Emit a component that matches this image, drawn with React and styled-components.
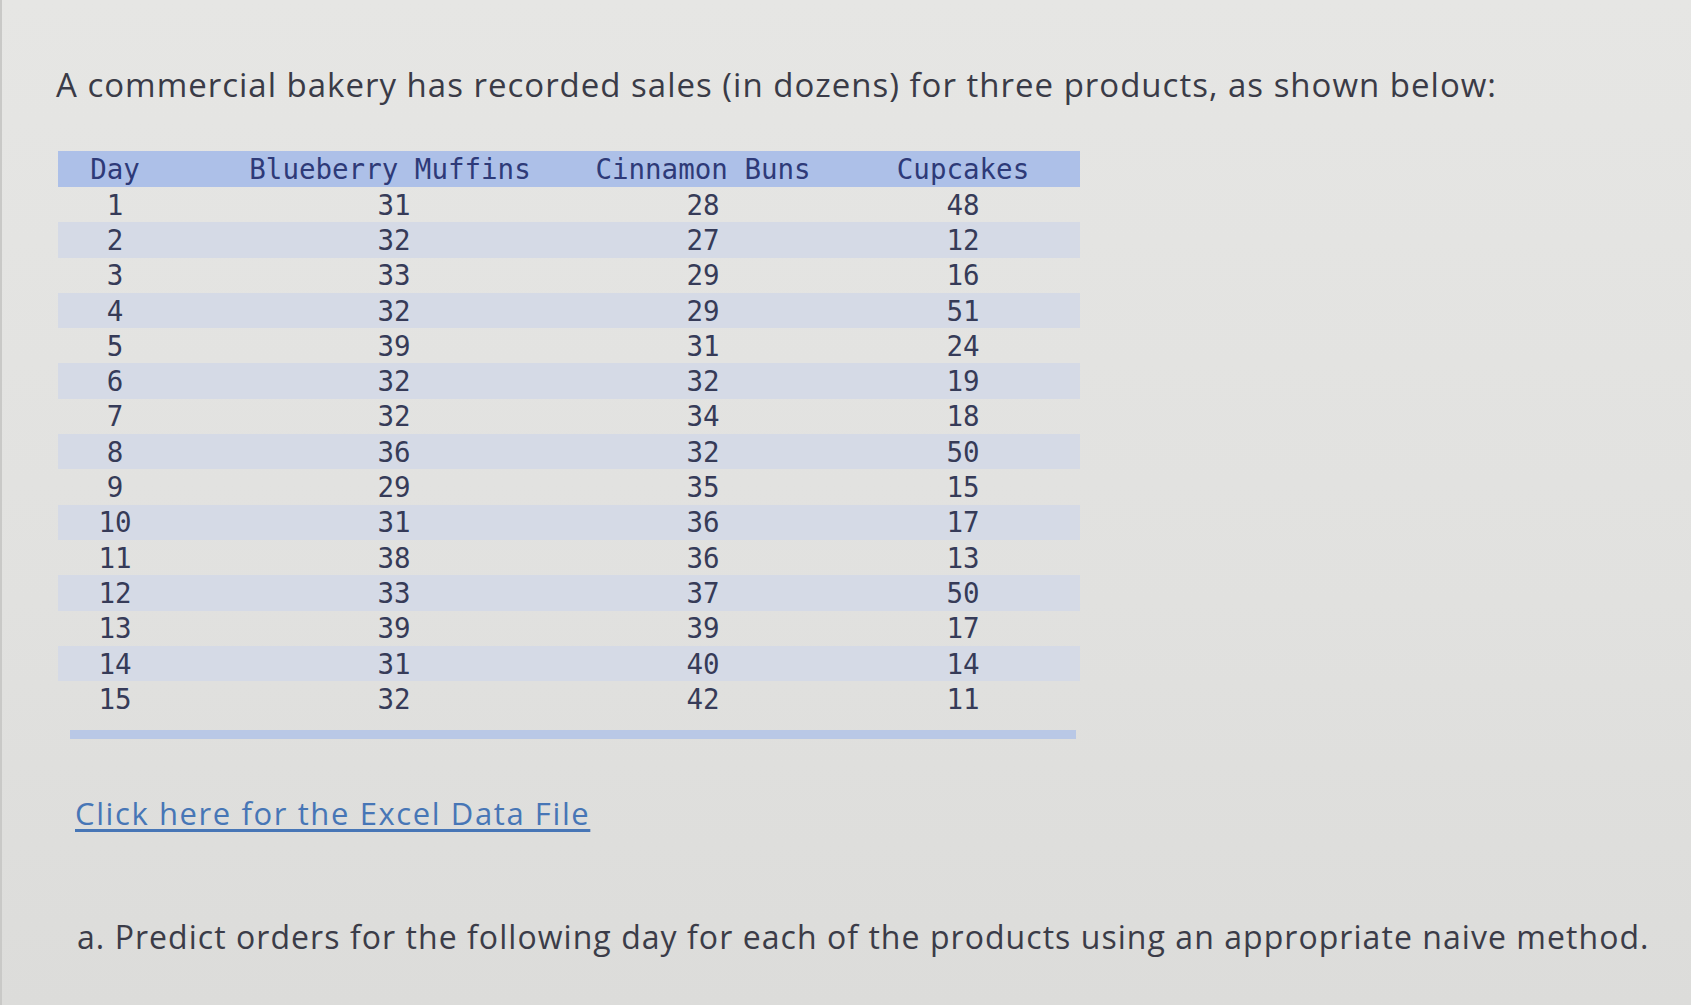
import React from 'react'
import styled, { createGlobalStyle } from 'styled-components'

const GlobalStyle = createGlobalStyle`
  html, body {
    margin: 0;
    padding: 0;
    background: #e3e3e1;
  }
`

const Page = styled.div`
  min-height: 1005px;
  box-sizing: border-box;
  padding: 63px 0 0 54px;
  background: linear-gradient(180deg, #e6e6e4 0%, #e1e1df 60%, #dcdcda 100%);
  border-left: 2px solid #c9c9c7;
  font-family: "Open Sans", "Noto Sans", sans-serif;
  color: #3b3c48;
`

const Title = styled.h1`
  margin: 0;
  font-size: 33px;
  line-height: 44px;
  font-weight: 400;
  letter-spacing: 1px;
  color: #3a3b47;
`

const Table = styled.div`
  margin: 44px 0 0 2px;
  width: 1022px;
  font-family: "DejaVu Sans Mono", "Liberation Mono", monospace;
  font-size: 27.5px;
`

const Row = styled.div`
  display: grid;
  grid-template-columns: 114px 444px 174px 290px;
  align-items: center;
  height: ${({ $head }) => ($head ? '36px' : '35.3px')};
  background: ${({ $head, $striped }) =>
    $head ? '#adc0e8' : $striped ? '#d5dae6' : 'transparent'};
  color: ${({ $head }) => ($head ? '#2e3a78' : '#363b58')};
`

const Cell = styled.div`
  display: flex;
  justify-content: center;
  white-space: nowrap;
  padding-left: ${({ $shift }) => $shift || 0}px;
  padding-right: ${({ $pull }) => $pull || 0}px;
`

const Bar = styled.div`
  margin: 14px 0 0 14px;
  width: 1006px;
  height: 9px;
  background: #b9c8e6;
`

const Link = styled.a`
  display: inline-block;
  margin: 54px 0 0 19px;
  font-size: 31px;
  line-height: 40px;
  letter-spacing: 1.6px;
  color: #4776b6;
  text-decoration: underline;
  text-underline-offset: 4px;
  cursor: pointer;
`

const Question = styled.p`
  margin: 84px 0 0 21px;
  font-size: 32px;
  line-height: 40px;
  letter-spacing: 1.05px;
  color: #3b3c48;
`

const data = [
  [1, 31, 28, 48],
  [2, 32, 27, 12],
  [3, 33, 29, 16],
  [4, 32, 29, 51],
  [5, 39, 31, 24],
  [6, 32, 32, 19],
  [7, 32, 34, 18],
  [8, 36, 32, 50],
  [9, 29, 35, 15],
  [10, 31, 36, 17],
  [11, 38, 36, 13],
  [12, 33, 37, 50],
  [13, 39, 39, 17],
  [14, 31, 40, 14],
  [15, 32, 42, 11],
]

const headers = ['Day', 'Blueberry Muffins', 'Cinnamon Buns', 'Cupcakes']
// the muffins label sits a little left of its numbers in the source
const headPull = [0, 8, 0, 0]

const App = () => (
  <Page>
    <GlobalStyle />
    <Title>A commercial bakery has recorded sales (in dozens) for three products, as shown below:</Title>
    <Table>
      <Row $head>
        {headers.map((h, i) => (
          <Cell key={h} $shift={i === 3 ? 56 : 0} $pull={headPull[i]}>{h}</Cell>
        ))}
      </Row>
      {data.map((row, r) => (
        <Row key={r} $striped={r % 2 === 1}>
          {row.map((v, i) => (
            <Cell key={i} $shift={i === 3 ? 56 : 0}>{v}</Cell>
          ))}
        </Row>
      ))}
    </Table>
    <Bar />
    <Link>Click here for the Excel Data File</Link>
    <Question>a. Predict orders for the following day for each of the products using an appropriate naive method.</Question>
  </Page>
)

export default App
